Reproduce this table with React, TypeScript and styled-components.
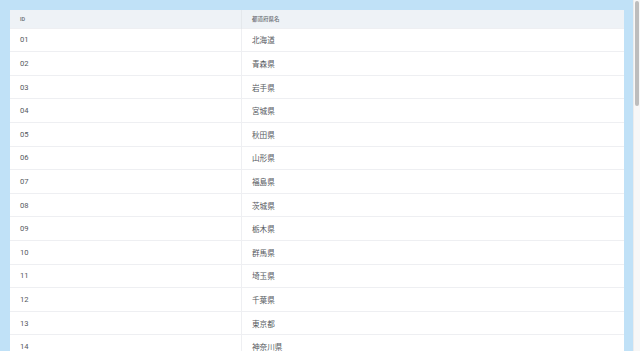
import React from "react";
import styled, { createGlobalStyle } from "styled-components";

const prefectures = [
  "北海道", "青森県", "岩手県", "宮城県", "秋田県", "山形県", "福島県", "茨城県", "栃木県", "群馬県",
  "埼玉県", "千葉県", "東京都", "神奈川県", "新潟県", "富山県", "石川県", "福井県", "山梨県", "長野県",
  "岐阜県", "静岡県", "愛知県", "三重県", "滋賀県", "京都府", "大阪府", "兵庫県", "奈良県", "和歌山県",
  "鳥取県", "島根県", "岡山県", "広島県", "山口県", "徳島県", "香川県", "愛媛県", "高知県", "福岡県",
  "佐賀県", "長崎県", "熊本県", "大分県", "宮崎県", "鹿児島県", "沖縄県",
];

const GlobalStyle = createGlobalStyle`
  body {
    margin: 0;
    background: #c0e1f7;
    font-family: Roboto, "Noto Sans CJK JP", sans-serif;
  }
`;

const Page = styled.div`
  padding: 10px 16px 10px 10px;
`;

// the page's own scrollbar, drawn over the right edge
const ScrollTrack = styled.div`
  position: fixed;
  top: 0;
  right: 0;
  width: 6px;
  height: 100vh;
  background: #f7f7f7;
  border-left: 1px solid #ececec;
`;

const ScrollThumb = styled.div`
  margin: 1px 0 0 1px;
  width: 4px;
  height: 105px;
  border-radius: 2px;
  background: #bdbdbd;
`;

const Table = styled.table`
  width: 100%;
  border-collapse: collapse;
  background: #ffffff;
  table-layout: fixed;
`;

const HeadCell = styled.th<{ $w?: number }>`
  width: ${(p) => (p.$w ? `${p.$w}px` : "auto")};
  height: 17.6px;
  padding: 0 10px;
  background: #eef2f6;
  color: #6a6e74;
  font-size: 5.5px;
  font-weight: 500;
  text-align: left;
  border-right: 1px solid #e4e8ec;
  &:last-child {
    border-right: none;
  }
`;

const Row = styled.tr`
  border-top: 1px solid #eeeff2;
`;

const Cell = styled.td`
  height: 22.6px;
  padding: 0 10px;
  color: #55595e;
  font-size: 7.6px;
  border-right: 1px solid #eeeff2;
  &:last-child {
    border-right: none;
  }
`;

export default function App() {
  return (
    <>
      <GlobalStyle />
      <Page>
        <Table>
          <thead>
            <tr>
              <HeadCell $w={211}>ID</HeadCell>
              <HeadCell>都道府県名</HeadCell>
            </tr>
          </thead>
          <tbody>
            {prefectures.map((name, i) => (
              <Row key={name}>
                <Cell>{String(i + 1).padStart(2, "0")}</Cell>
                <Cell>{name}</Cell>
              </Row>
            ))}
          </tbody>
        </Table>
      </Page>
      <ScrollTrack>
        <ScrollThumb />
      </ScrollTrack>
    </>
  );
}
